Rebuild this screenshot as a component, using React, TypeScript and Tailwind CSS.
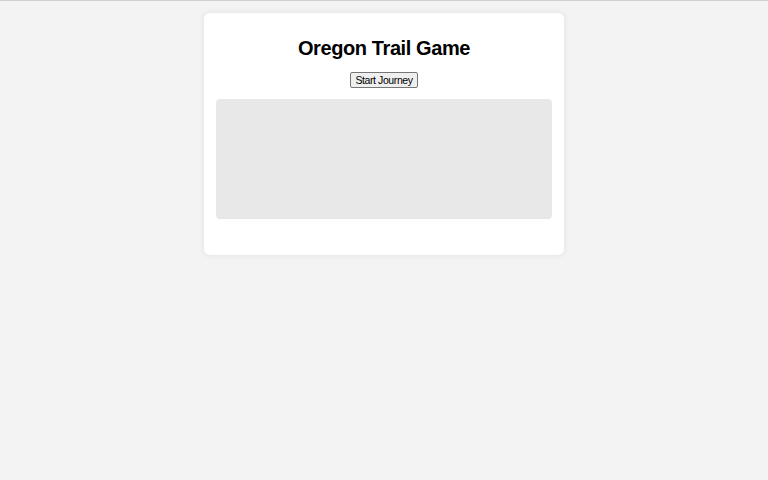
export default function App() {
  return (
    <div className="min-h-screen border-t border-[#cfcfcf] bg-[#f3f3f3] font-['Liberation_Sans',Arial,sans-serif]">
      <div className="mx-auto mt-3 w-[360px] rounded-md bg-white px-3 pb-9 pt-[23px] shadow-[0_0_6px_rgba(0,0,0,0.08)]">
        <h1 className="text-center text-[20px] font-bold leading-6 tracking-[-0.4px] text-black">
          Oregon Trail Game
        </h1>
        <div className="mt-3 flex justify-center">
          <button
            type="button"
            className="h-4 rounded-[2px] border border-[#767676] bg-[#efefef] px-[4px] text-[10.5px] leading-[14px] tracking-[-0.4px] text-black"
          >
            Start Journey
          </button>
        </div>
        <div className="mt-[11px] h-[120px] rounded bg-[#e8e8e8]" />
      </div>
    </div>
  );
}
